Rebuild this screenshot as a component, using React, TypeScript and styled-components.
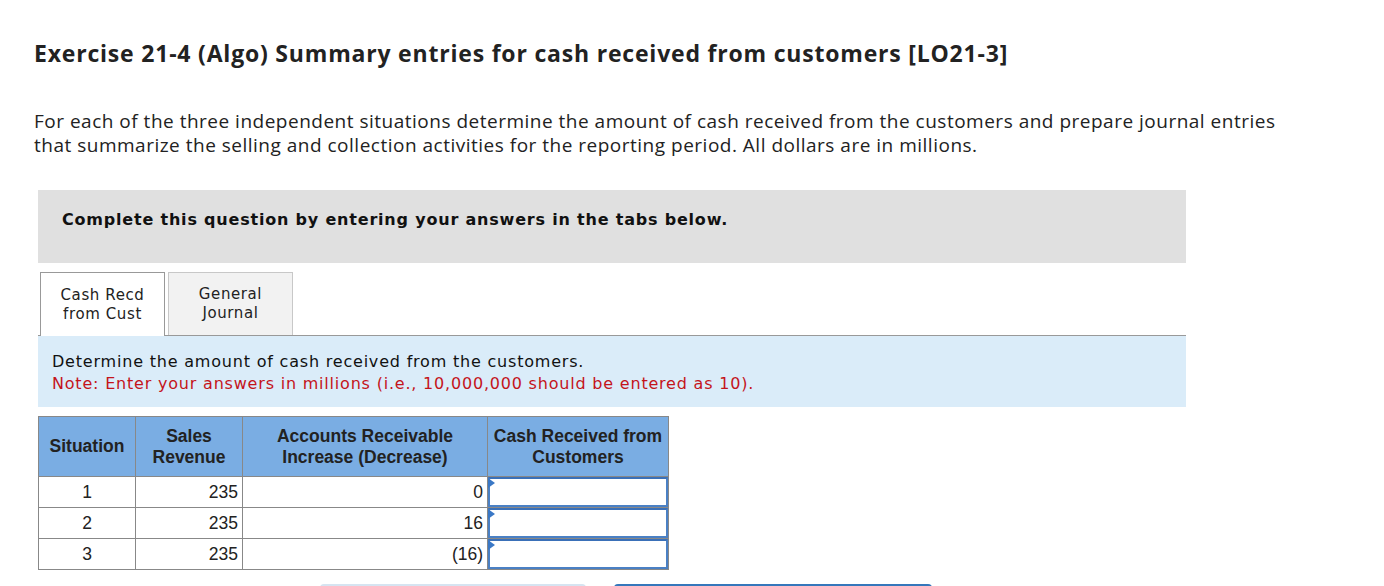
import React from 'react';
import styled, { createGlobalStyle } from 'styled-components';

const GlobalStyle = createGlobalStyle`
  html, body {
    margin: 0;
    padding: 0;
    background: #fff;
  }
  body {
    font-family: "Open Sans", "Liberation Sans", sans-serif;
    color: #222;
  }
`;

type Row = {
  situation: number;
  sales: string;
  receivable: string;
};

const rows: Row[] = [
  { situation: 1, sales: '235', receivable: '0' },
  { situation: 2, sales: '235', receivable: '16' },
  { situation: 3, sales: '235', receivable: '(16)' },
];

const App: React.FC = () => {
  return (
    <>
      <GlobalStyle />
      <Page>
        <Title>Exercise 21-4 (Algo) Summary entries for cash received from customers [LO21-3]</Title>
        <Intro>
          For each of the three independent situations determine the amount of cash received from the customers and prepare journal entries
          <br />
          that summarize the selling and collection activities for the reporting period. All dollars are in millions.
        </Intro>
        <Question>
          <Banner>Complete this question by entering your answers in the tabs below.</Banner>
          <Tabs>
            <Tab $active>
              Cash Recd
              <br />
              from Cust
            </Tab>
            <Tab>
              General
              <br />
              Journal
            </Tab>
          </Tabs>
          <Instructions>
            <div>Determine the amount of cash received from the customers.</div>
            <Note>Note: Enter your answers in millions (i.e., 10,000,000 should be entered as 10).</Note>
          </Instructions>
          <Table>
            <colgroup>
              <col style={{ width: 97 }} />
              <col style={{ width: 107 }} />
              <col style={{ width: 245 }} />
              <col style={{ width: 181 }} />
            </colgroup>
            <thead>
              <tr>
                <HeadCell>Situation</HeadCell>
                <HeadCell>
                  Sales
                  <br />
                  Revenue
                </HeadCell>
                <HeadCell>
                  Accounts Receivable
                  <br />
                  Increase (Decrease)
                </HeadCell>
                <HeadCell>
                  Cash Received from
                  <br />
                  Customers
                </HeadCell>
              </tr>
            </thead>
            <tbody>
              {rows.map((row) => (
                <tr key={row.situation}>
                  <Cell $align="center">{row.situation}</Cell>
                  <Cell $align="right">{row.sales}</Cell>
                  <Cell $align="right">{row.receivable}</Cell>
                  <InputCell>
                    <InputWrap>
                      <AnswerInput type="text" aria-label={`Cash received, situation ${row.situation}`} />
                    </InputWrap>
                  </InputCell>
                </tr>
              ))}
            </tbody>
          </Table>
          <Buttons>
            <PrevButton />
            <NextButton />
          </Buttons>
        </Question>
      </Page>
    </>
  );
};

const Page = styled.div`
  padding: 38px 0 0 34px;
  width: 1350px;
`;

const Title = styled.h1`
  margin: 0;
  font-family: "Open Sans", "Liberation Sans", sans-serif;
  font-weight: 700;
  font-size: 23px;
  line-height: 30px;
  letter-spacing: 0.8px;
  color: #222;
`;

const Intro = styled.p`
  margin: 41px 0 0;
  font-family: "Open Sans", "Liberation Sans", sans-serif;
  font-weight: 400;
  font-size: 19px;
  line-height: 24px;
  letter-spacing: 0.5px;
  color: #222;
`;

const Question = styled.div`
  margin: 33px 0 0 4px;
  width: 1148px;
`;

const Banner = styled.div`
  background: #e0e0e0;
  height: 73px;
  box-sizing: border-box;
  padding: 19px 24px 0;
  font-family: "DejaVu Sans", Verdana, sans-serif;
  font-weight: 700;
  font-size: 16px;
  line-height: 22px;
  letter-spacing: 0.8px;
  color: #111;
`;

const Tabs = styled.div`
  display: flex;
  gap: 3px;
  margin-top: 9px;
  padding-left: 2px;
  border-bottom: 1px solid #999;
`;

const Tab = styled.div<{ $active?: boolean }>`
  width: 125px;
  box-sizing: border-box;
  display: flex;
  align-items: center;
  justify-content: center;
  text-align: center;
  font-family: "DejaVu Sans", Verdana, sans-serif;
  font-size: 15px;
  line-height: 19px;
  letter-spacing: 0.6px;
  color: #222;
  background: ${(p) => (p.$active ? '#fff' : '#f2f2f2')};
  border: 1px solid ${(p) => (p.$active ? '#999' : '#c8c8c8')};
  border-bottom: none;
  margin-bottom: ${(p) => (p.$active ? '-1px' : '0')};
  height: ${(p) => (p.$active ? '64px' : '63px')};
`;

const Instructions = styled.div`
  background: #daecf9;
  height: 71px;
  box-sizing: border-box;
  padding: 15px 14px 0;
  font-family: "DejaVu Sans", Verdana, sans-serif;
  font-size: 16px;
  line-height: 22px;
  letter-spacing: 0.8px;
  color: #111;
`;

const Note = styled.div`
  color: #c4141b;
`;

const Table = styled.table`
  margin-top: 9px;
  border-collapse: collapse;
  table-layout: fixed;
  width: 630px;
  font-family: "Liberation Sans", Arial, sans-serif;
  font-size: 17.5px;
  color: #222;
`;

const HeadCell = styled.th`
  background: #7aade3;
  border: 1px solid #888;
  height: 59px;
  padding: 0 2px;
  font-weight: 700;
  font-size: 17.5px;
  line-height: 21px;
  color: #222;
  text-align: center;
`;

const Cell = styled.td<{ $align: 'center' | 'right' }>`
  border: 1px solid #888;
  height: 30px;
  padding: 0 4px;
  text-align: ${(p) => p.$align};
  line-height: 20px;
`;

const InputCell = styled.td`
  border: 1px solid #888;
  height: 30px;
  padding: 0;
`;

const InputWrap = styled.div`
  position: relative;
  height: 30px;

  &::before {
    content: '';
    position: absolute;
    left: 0;
    top: 1px;
    width: 0;
    height: 0;
    border-top: 5px solid transparent;
    border-bottom: 5px solid transparent;
    border-left: 7px solid #3a78c6;
  }
`;

const AnswerInput = styled.input`
  display: block;
  box-sizing: border-box;
  width: 100%;
  height: 30px;
  margin: 0;
  border: 2px solid #4a80c4;
  border-top-color: #3a70b8;
  background: #fff;
  outline: none;
  font-family: "Liberation Sans", Arial, sans-serif;
  font-size: 16px;
  text-align: right;
`;

const Buttons = styled.div`
  display: flex;
  gap: 28px;
  margin-top: 14px;
  padding-left: 282px;
`;

const NavButton = styled.button`
  height: 34px;
  border: none;
  border-radius: 4px;
  padding: 0;
`;

const PrevButton = styled(NavButton)`
  width: 266px;
  background: #d6e4f1;
`;

const NextButton = styled(NavButton)`
  width: 318px;
  background: #3577bb;
`;

export default App;
